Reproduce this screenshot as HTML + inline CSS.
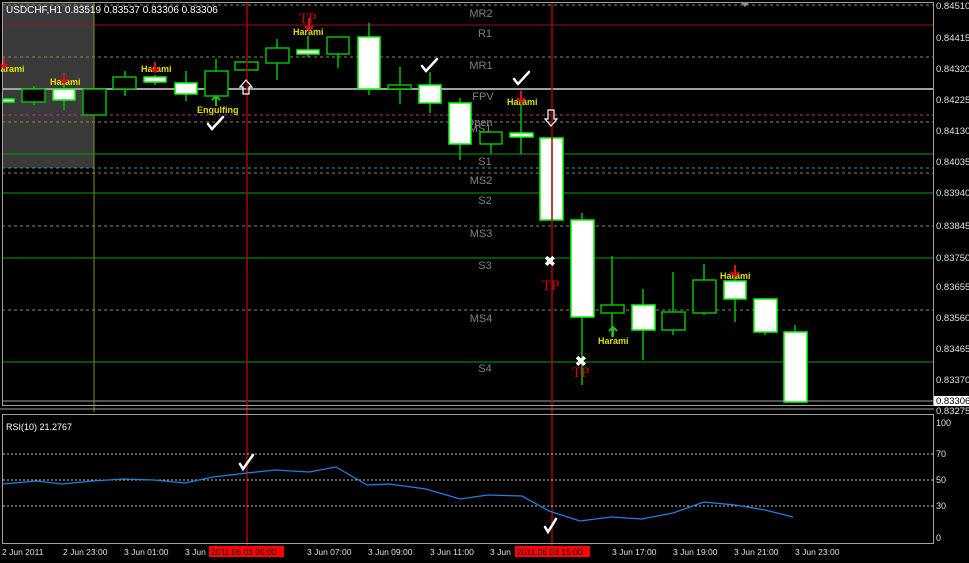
<!DOCTYPE html>
<html><head><meta charset="utf-8"><style>
html,body{margin:0;padding:0;background:#000;width:969px;height:563px;overflow:hidden}
svg{display:block}
text{font-family:"Liberation Sans",sans-serif}
text.tp{font-family:"Liberation Serif",serif}
</style></head><body>
<svg width="969" height="563" viewBox="0 0 969 563" xmlns="http://www.w3.org/2000/svg">
<rect width="969" height="563" fill="#000"/>
<rect x="2" y="2" width="92" height="166" fill="#3a3a3a"/>
<g stroke-width="1">
<line x1="2" y1="5" x2="933" y2="5" stroke="#8a8a3a" stroke-dasharray="3,3"/>
<line x1="2" y1="25" x2="933" y2="25" stroke="#a01010"/>
<line x1="2" y1="57" x2="933" y2="57" stroke="#8a8a3a" stroke-dasharray="3,3"/>
<line x1="2" y1="89" x2="933" y2="89" stroke="#a0a0a0" stroke-width="2"/>
<line x1="2" y1="115" x2="933" y2="115" stroke="#c03080" stroke-dasharray="3,3"/>
<line x1="2" y1="122" x2="933" y2="122" stroke="#8a8a3a" stroke-dasharray="3,3"/>
<line x1="2" y1="154" x2="933" y2="154" stroke="#00a000"/>
<line x1="2" y1="168" x2="933" y2="168" stroke="#20a0c0" stroke-dasharray="3,3"/>
<line x1="2" y1="173" x2="933" y2="173" stroke="#8a8a3a" stroke-dasharray="3,3"/>
<line x1="2" y1="193" x2="933" y2="193" stroke="#00a000"/>
<line x1="2" y1="226" x2="933" y2="226" stroke="#8a8a3a" stroke-dasharray="3,3"/>
<line x1="2" y1="258" x2="933" y2="258" stroke="#00a000"/>
<line x1="2" y1="310" x2="933" y2="310" stroke="#8a8a3a" stroke-dasharray="3,3"/>
<line x1="2" y1="362" x2="933" y2="362" stroke="#00a000"/>
<line x1="2" y1="401" x2="933" y2="401" stroke="#a0a0a0"/>
</g>
<line x1="94" y1="2" x2="94" y2="412" stroke="#8a8a20"/>
<g fill="#808080" font-size="11" text-anchor="middle">
<text x="481" y="17">MR2</text><text x="485" y="37">R1</text><text x="481" y="69">MR1</text>
<text x="483" y="100">FPV</text><text x="479" y="126">Open</text><text x="480" y="132">MS1</text>
<text x="485" y="165">S1</text><text x="481" y="184">MS2</text><text x="485" y="204">S2</text>
<text x="481" y="237">MS3</text><text x="485" y="269">S3</text><text x="481" y="322">MS4</text>
<text x="485" y="372">S4</text>
</g>
<g stroke="#00c000" stroke-width="1.5">
<line x1="34" y1="86" x2="34" y2="105"/><line x1="64" y1="82" x2="64" y2="110"/><line x1="95" y1="89" x2="95" y2="115"/>
<line x1="125" y1="71" x2="125" y2="96"/><line x1="155" y1="75" x2="155" y2="85"/><line x1="186" y1="71" x2="186" y2="101"/>
<line x1="216" y1="59" x2="216" y2="101"/><line x1="277" y1="39" x2="277" y2="80"/><line x1="308" y1="36" x2="308" y2="57"/>
<line x1="338" y1="54" x2="338" y2="68"/><line x1="369" y1="23" x2="369" y2="95"/><line x1="400" y1="67" x2="400" y2="104"/>
<line x1="430" y1="72" x2="430" y2="113"/><line x1="460" y1="98" x2="460" y2="160"/><line x1="491" y1="144" x2="491" y2="154"/>
<line x1="521" y1="104" x2="521" y2="154"/><line x1="582" y1="213" x2="582" y2="385"/><line x1="612" y1="256" x2="612" y2="337"/>
<line x1="643" y1="289" x2="643" y2="360"/><line x1="673" y1="272" x2="673" y2="335"/><line x1="704" y1="264" x2="704" y2="315"/>
<line x1="735" y1="268" x2="735" y2="322"/><line x1="765" y1="299" x2="765" y2="335"/><line x1="795" y1="325" x2="795" y2="332"/>
</g>
<g stroke="#00ff00" stroke-width="1.5" fill="#fff">
<rect x="3" y="99" width="11" height="3"/>
<rect x="53" y="89" width="22" height="11"/>
<rect x="144" y="77" width="22" height="5"/>
<rect x="175" y="83" width="22" height="11"/>
<rect x="297" y="50" width="22" height="4"/>
<rect x="358" y="37" width="22" height="52"/>
<rect x="419" y="85" width="22" height="18"/>
<rect x="449" y="103" width="22" height="41"/>
<rect x="510" y="133" width="23" height="4"/>
<rect x="540" y="138" width="23" height="82"/>
<rect x="571" y="220" width="23" height="97"/>
<rect x="632" y="305" width="23" height="25"/>
<rect x="724" y="281" width="22" height="18"/>
<rect x="754" y="299" width="23" height="33"/>
<rect x="784" y="332" width="23" height="70"/>
</g>
<g stroke="#00c000" stroke-width="1.5" fill="#000">
<rect x="22" y="89" width="23" height="13"/>
<rect x="83" y="89" width="23" height="26"/>
<rect x="113" y="77" width="23" height="12"/>
<rect x="205" y="71" width="23" height="25"/>
<rect x="235" y="62" width="23" height="8"/>
<rect x="266" y="48" width="23" height="15"/>
<rect x="327" y="37" width="22" height="17"/>
<rect x="388" y="85" width="23" height="4"/>
<rect x="480" y="132" width="22" height="12"/>
<rect x="601" y="305" width="23" height="8"/>
<rect x="662" y="312" width="23" height="18"/>
<rect x="693" y="280" width="23" height="33"/>
</g>
<line x1="247" y1="2" x2="247" y2="545" stroke="#b00000" stroke-width="1.5"/>
<line x1="552" y1="2" x2="552" y2="545" stroke="#b00000" stroke-width="1.5"/>
<rect x="2.5" y="2.5" width="931" height="403" fill="none" stroke="#a0a0a0"/>
<line x1="0" y1="409" x2="934" y2="409" stroke="#a0a0a0"/>
<polygon points="740,2 750,2 745,7" fill="#8090a0"/>
<g fill="#e0e0e0" font-size="9.5">
<text x="936" y="9">0.84510</text><text x="936" y="41">0.84415</text><text x="936" y="72">0.84320</text>
<text x="936" y="103">0.84225</text><text x="936" y="134">0.84130</text><text x="936" y="165">0.84035</text>
<text x="936" y="196">0.83940</text><text x="936" y="229">0.83845</text><text x="936" y="261">0.83750</text>
<text x="936" y="290">0.83655</text><text x="936" y="321">0.83560</text><text x="936" y="352">0.83465</text>
<text x="936" y="383">0.83370</text><text x="936" y="414">0.83275</text>
</g>
<rect x="934" y="396" width="35" height="10" fill="#fff"/>
<text x="936" y="404" font-size="9.5" fill="#000">0.83306</text>
<text x="6" y="13" font-size="10" fill="#fff">USDCHF,H1  0.83519 0.83537 0.83306 0.83306</text>
<g fill="#e0e000" font-size="9" font-weight="bold">
<text x="-6" y="72">Harami</text><text x="50" y="85">Harami</text><text x="141" y="72">Harami</text>
<text x="197" y="113">Engulfing</text><text x="293" y="35">Harami</text><text x="507" y="105">Harami</text>
<text x="598" y="344">Harami</text><text x="720" y="279">Harami</text>
</g>
<g stroke="#e01010" stroke-width="2" fill="none">
<path d="M4 58v10M1 64l3 4 3-4"/><path d="M64 73v10M60 79l4 4 4-4"/><path d="M155 62v10M151 68l4 4 4-4"/>
<path d="M309 18v12M305 26l4 4 4-4"/><path d="M521 91v11M517 98l4 4 4-4"/><path d="M735 265v11M731 272l4 4 4-4"/>
</g>
<g stroke="#20c020" stroke-width="2" fill="none">
<path d="M216 106v-10M212 100l4-4 4 4"/><path d="M613 337v-10M609 331l4-4 4 4"/>
</g>
<path d="M246 80l-6 7h3v7h6v-7h3z" fill="none" stroke="#fff" stroke-width="1.2"/>
<path d="M551 126l-6-7h3v-9h6v9h3z" fill="none" stroke="#fff" stroke-width="1.2"/>
<g fill="#d00000" font-size="15">
<text class="tp" x="299" y="23">TP</text><text class="tp" x="542" y="290">TP</text><text class="tp" x="572" y="377">TP</text>
</g>
<g fill="#fff" font-size="14" font-weight="bold">
<text x="544" y="266">✖</text><text x="575" y="366">✖</text>
</g>
<g fill="none" stroke="#fff" stroke-width="2.5" stroke-linecap="round">
<path d="M208 124l4 5 11-12"/><path d="M422 66l4 5 11-12"/><path d="M514 79l4 5 11-12"/>
<path d="M240 464l3 5 10-14"/><path d="M545 527l3 5 8-13"/>
</g>
<rect x="2.5" y="414.5" width="931" height="129" fill="none" stroke="#a0a0a0"/>
<g stroke="#c0c0c0" stroke-dasharray="2,2">
<line x1="3" y1="454" x2="933" y2="454"/><line x1="3" y1="480" x2="933" y2="480"/><line x1="3" y1="506" x2="933" y2="506"/>
</g>
<polyline fill="none" stroke="#2080e0" stroke-width="1.3" points="3,484 37,481 62,484 93,481 123,479 154,480 185,483 213,477 247,473 275,470 309,472 336,467 367,485 389,484 426,489 460,499 488,495 522,496 549,511 580,521 611,517 642,519 673,513 704,502 735,505 765,510 793,517"/>
<text x="6" y="430" font-size="9" fill="#fff">RSI(10) 21.2767</text>
<g fill="#e0e0e0" font-size="9">
<text x="936" y="426">100</text><text x="936" y="457">70</text><text x="936" y="483">50</text>
<text x="936" y="509">30</text><text x="936" y="541">0</text>
</g>
<g fill="#e0e0e0" font-size="8.5">
<text x="2" y="555">2 Jun 2011</text><text x="63" y="555">2 Jun 23:00</text><text x="124" y="555">3 Jun 01:00</text>
<text x="185" y="555">3 Jun</text><text x="307" y="555">3 Jun 07:00</text><text x="368" y="555">3 Jun 09:00</text>
<text x="430" y="555">3 Jun 11:00</text><text x="490" y="555">3 Jun</text><text x="612" y="555">3 Jun 17:00</text>
<text x="673" y="555">3 Jun 19:00</text><text x="734" y="555">3 Jun 21:00</text><text x="795" y="555">3 Jun 23:00</text>
</g>
<rect x="209" y="546" width="75" height="11" fill="#ff0000"/>
<rect x="515" y="546" width="75" height="11" fill="#ff0000"/>
<g fill="#000" font-size="8.5"><text x="211" y="555">2011.06.03 05:00</text><text x="517" y="555">2011.06.03 15:00</text></g>
</svg>
</body></html>
